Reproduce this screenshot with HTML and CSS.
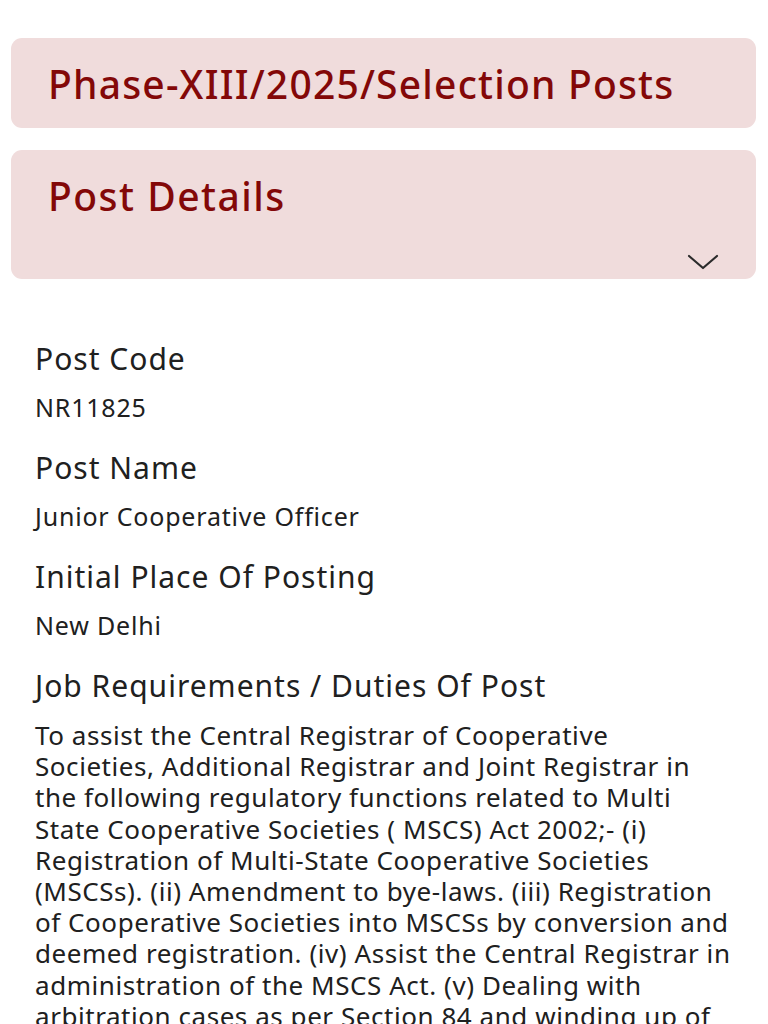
FILE: index.html
```html
<!DOCTYPE html>
<html lang="en">
<head>
<meta charset="utf-8">
<title>Post Details</title>
<link rel="stylesheet" href="styles.css">
</head>
<body>
<div class="page">
  <div class="card card-phase">
    <h1 class="card-title">Phase-XIII/2025/Selection Posts</h1>
  </div>
  <div class="card card-details">
    <h2 class="card-title">Post Details</h2>
    <svg class="chevron" width="32" height="18" viewBox="0 0 32 18" aria-hidden="true">
      <polyline points="2,3 16,15 30,3" fill="none" stroke="#2b2b2b" stroke-width="2.2" stroke-linecap="round" stroke-linejoin="round"/>
    </svg>
  </div>
  <div class="details">
    <div class="field">
      <div class="label">Post Code</div>
      <div class="value">NR11825</div>
    </div>
    <div class="field">
      <div class="label">Post Name</div>
      <div class="value">Junior Cooperative Officer</div>
    </div>
    <div class="field">
      <div class="label">Initial Place Of Posting</div>
      <div class="value">New Delhi</div>
    </div>
    <div class="field">
      <div class="label">Job Requirements / Duties Of Post</div>
      <div class="value para">To assist the Central Registrar of Cooperative<br>Societies, Additional Registrar and Joint Registrar in<br>the following regulatory functions related to Multi<br>State Cooperative Societies ( MSCS) Act 2002;- (i)<br>Registration of Multi-State Cooperative Societies<br>(MSCSs). (ii) Amendment to bye-laws. (iii) Registration<br>of Cooperative Societies into MSCSs by conversion and<br>deemed registration. (iv) Assist the Central Registrar in<br>administration of the MSCS Act. (v) Dealing with<br>arbitration cases as per Section 84 and winding up of<br>Multi-State Cooperative Societies.</div>
    </div>
  </div>
</div>
</body>
</html>
```

FILE: styles.css
```css
html, body {
  margin: 0;
  padding: 0;
  background: #ffffff;
}
body {
  font-family: "Noto Sans", "Open Sans", sans-serif;
  color: #202020;
  overflow: hidden;
}
.page {
  display: flex;
  flex-direction: column;
  padding: 38px 12px 0 11px;
}
.card {
  background: #f0dcdc;
  border-radius: 11px;
  padding: 0 37px;
  box-sizing: border-box;
  position: relative;
}
.card-title {
  margin: 0;
  font-weight: 500;
  color: #830808;
  font-size: 39px;
  letter-spacing: 1.2px;
  white-space: nowrap;
}
.card-phase {
  height: 90px;
  display: flex;
  align-items: center;
}
.card-phase .card-title {
  line-height: 48px;
  margin-top: 2px;
}
.card-details {
  margin-top: 22px;
  height: 129px;
  padding-top: 22px;
}
.card-details .card-title {
  line-height: 48px;
  letter-spacing: 1.5px;
}
.chevron {
  position: absolute;
  right: 37px;
  top: 103px;
}
.details {
  display: flex;
  flex-direction: column;
  padding: 60px 0 0 24px;
}
.field {
  display: flex;
  flex-direction: column;
}
.label {
  font-size: 30px;
  line-height: 40px;
  letter-spacing: 1px;
}
.value {
  font-size: 25px;
  line-height: 40px;
  letter-spacing: 0.8px;
  margin-top: 8px;
  margin-bottom: 21px;
}
.para {
  font-size: 26px;
  line-height: 31.2px;
  letter-spacing: 0.55px;
  margin-top: 14px;
  white-space: nowrap;
}
```
